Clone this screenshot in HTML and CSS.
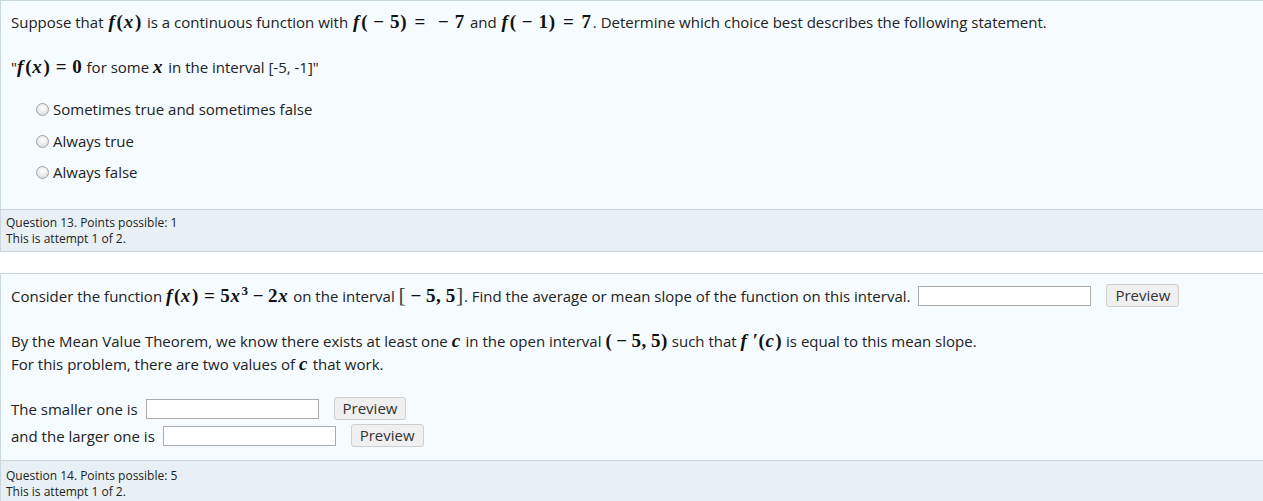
FILE: index.html
```html
<!DOCTYPE html>
<html>
<head>
<meta charset="utf-8">
<link rel="stylesheet" href="styles.css">
</head>
<body>
<div class="page">
  <section class="question q1">
    <div class="body">
      <p class="line first">Suppose that <span class="m"><i>f</i>(<i>x</i>)</span> is a continuous function with <span class="m"><i>f</i>(<span class="bin">−</span>5)<span class="rel">=</span><span class="bin">−</span>7</span> and <span class="m"><i>f</i>(<span class="bin">−</span>1)<span class="rel">=</span>7</span>. Determine which choice best describes the following statement.</p>
      <p class="line stmt">"<span class="m"><i>f</i>(<i>x</i>)<span class="rel">=</span>0</span> for some <span class="m"><i>x</i></span> in the interval [-5, -1]"</p>
      <ul class="choices">
        <li><span class="radio"></span>Sometimes true and sometimes false</li>
        <li><span class="radio"></span>Always true</li>
        <li><span class="radio"></span>Always false</li>
      </ul>
    </div>
    <div class="footer">Question 13. Points possible: 1<br>This is attempt 1 of 2.</div>
  </section>

  <section class="question q2">
    <div class="body">
      <p class="row first">Consider the function <span class="m"><i>f</i>(<i>x</i>)<span class="rel">=</span>5<i>x</i><sup>3</sup><span class="bin">−</span>2<i>x</i></span> on the interval <span class="m"><span class="big">[</span><span class="bin">−</span>5,&thinsp;5<span class="big">]</span></span>. Find the average or mean slope of the function on this interval. <span class="field"></span><span class="btn">Preview</span></p>
      <p class="para">By the Mean Value Theorem, we know there exists at least one <span class="m"><i>c</i></span> in the open interval <span class="m">(<span class="bin">−</span>5,&thinsp;5)</span> such that <span class="m"><i>f</i>&thinsp;′(<i>c</i>)</span> is equal to this mean slope.<br>For this problem, there are two values of <span class="m"><i>c</i></span> that work.</p>
      <p class="row ans">The smaller one is <span class="field"></span><span class="btn">Preview</span></p>
      <p class="row ans">and the larger one is <span class="field"></span><span class="btn">Preview</span></p>
    </div>
    <div class="footer">Question 14. Points possible: 5<br>This is attempt 1 of 2.</div>
  </section>
</div>
</body>
</html>
```
FILE: styles.css
```css
html, body {
  margin: 0;
  padding: 0;
  background: #ffffff;
  overflow: hidden;
}
.page {
  width: 1275px;
  font-family: "Open Sans", "Liberation Sans", sans-serif;
  font-size: 15px;
  color: #222;
}
.question {
  border: 1px solid #c9d7de;
  border-right: none;
  background: #f5fbfe;
}
.q2 {
  margin-top: 21px;
}
.body {
  padding: 0 10px;
}
p {
  margin: 0;
}
.line {
  line-height: 20px;
}
.q1 .first {
  padding-top: 11px;
}
.stmt {
  margin-top: 25px;
}
.m {
  font-family: "Liberation Serif", "DejaVu Serif", serif;
  font-size: 19px;
  font-weight: bold;
  line-height: 1;
  letter-spacing: 0.8px;
  color: #111;
  white-space: nowrap;
}
.m i {
  font-style: italic;
  margin-right: 1px;
}
.rel {
  margin: 0 5px;
}
.bin {
  margin: 0 4px;
}
.q1 .first .m {
  padding: 0 1px;
}
.q1 .first .rel {
  margin: 0 7px;
}
.q1 .first .bin {
  margin: 0 5px;
}
.q2 .first .m {
  letter-spacing: 0.6px;
}
.para .m {
  letter-spacing: 0.5px;
}
.para .bin {
  margin: 0 4px;
}
.m sup {
  font-size: 13px;
  line-height: 0;
}
.big {
  font-weight: normal;
  font-size: 22px;
  line-height: 0;
  color: #444;
}
.choices {
  list-style: none;
  margin: 22px 0 0 0;
  padding: 0 0 27px 25px;
}
.choices li {
  display: flex;
  align-items: center;
  line-height: 20px;
  margin-bottom: 11px;
}
.choices li:first-child {
  margin-bottom: 12px;
}
.choices li:last-child {
  margin-bottom: 0;
}
.radio {
  width: 11px;
  height: 11px;
  border-radius: 50%;
  border: 1px solid #a3a3a3;
  background: radial-gradient(circle at 50% 35%, #fdfdfd 0%, #e9e9e9 55%, #cfcfcf 100%);
  margin-right: 4px;
  box-sizing: content-box;
}
.footer {
  background: #e8f0f5;
  border-top: 1px solid #c9d7de;
  padding: 5px 5px 4px;
  font-size: 12px;
  line-height: 16px;
  color: #222;
}
.q2 .footer {
  padding-top: 7px;
}
.row {
  display: flex;
  align-items: center;
  white-space: pre;
}
.q2 .first {
  padding-top: 10px;
  height: 23px;
}
.field {
  display: inline-block;
  width: 171px;
  height: 18px;
  border: 1px solid #ababab;
  background: #fff;
  margin-left: 4px;
}
.btn {
  display: inline-block;
  margin-left: 15px;
  height: 21px;
  line-height: 21px;
  padding: 0 8px;
  border: 1px solid #cfcfcf;
  border-radius: 3px;
  background: #efefef;
  color: #333;
  font-size: 15px;
}
.para {
  margin-top: 23px;
  line-height: 23px;
}
.ans {
  height: 27px;
}
.para + .ans {
  margin-top: 19px;
}
.q2 .body {
  padding-bottom: 11px;
}
```
